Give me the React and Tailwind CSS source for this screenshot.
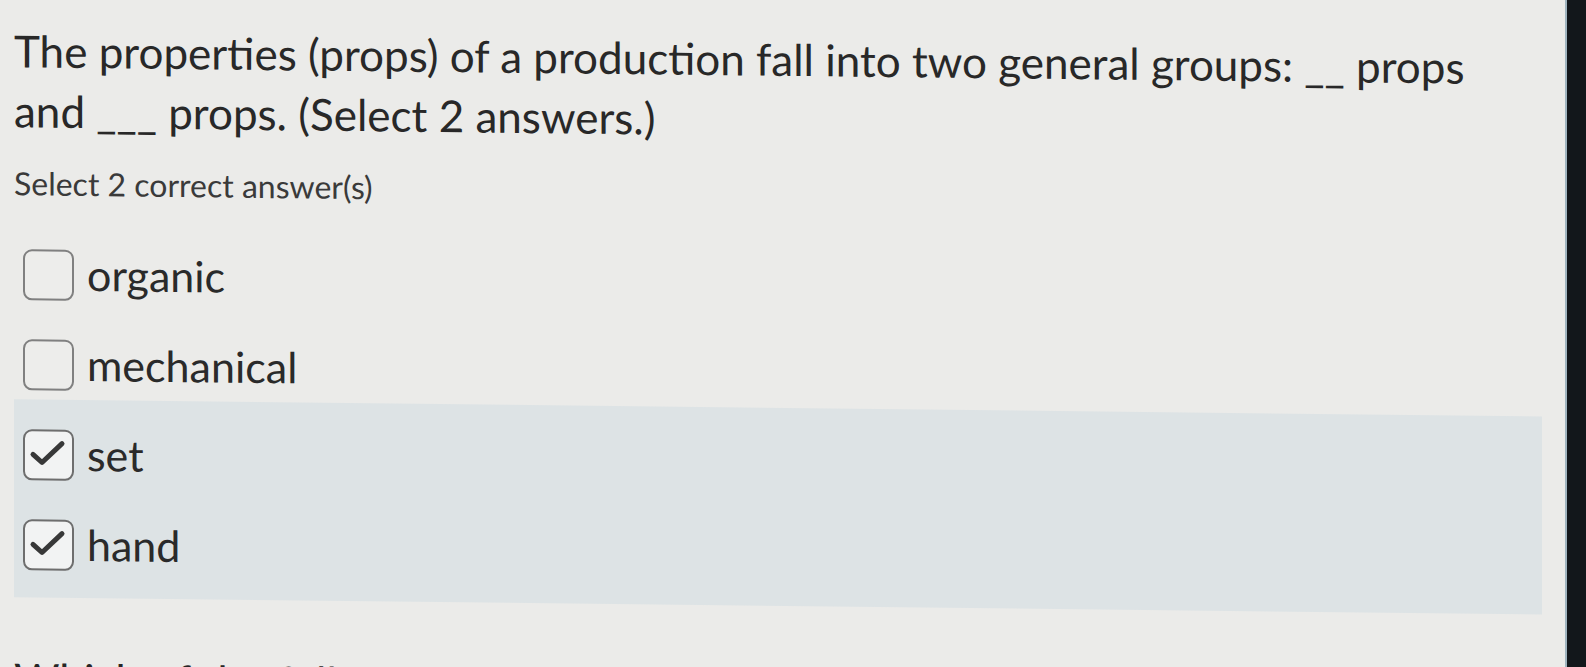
import React from "react";

const options = [
  { label: "organic", checked: false },
  { label: "mechanical", checked: false },
  { label: "set", checked: true },
  { label: "hand", checked: true },
];

const Checkbox = ({ checked }) => (
  <div
    className={
      checked
        ? "w-[51px] h-[51px] shrink-0 rounded-[9px] border-2 border-[#6e6e6e] bg-[#f2f3f3] flex items-center justify-center"
        : "w-[51px] h-[51px] shrink-0 rounded-[9px] border-2 border-[#808080] bg-[#ededeb]"
    }
  >
    {checked && (
      <svg width="47" height="47" viewBox="0 0 47 47" fill="none">
        <polyline
          points="8,23 17,31 37,12"
          stroke="#383838"
          strokeWidth="5"
          strokeLinecap="round"
          strokeLinejoin="round"
        />
      </svg>
    )}
  </div>
);

const OptionRow = ({ label, checked }) => (
  <div className="h-[90px] flex items-center gap-[13px] pl-[9px]">
    <Checkbox checked={checked} />
    <span className="text-[43px] leading-[50px] text-[#2a2a2a]">{label}</span>
  </div>
);

const App = () => {
  const plain = options.filter((o) => !o.checked);
  const picked = options.filter((o) => o.checked);

  return (
    <div className="h-screen w-full overflow-hidden bg-[#ebebe9] flex font-['Lato',_'Open_Sans',_sans-serif]">
      {/* question area */}
      <div className="flex-1 overflow-hidden">
        <div className="origin-top-left skew-y-[0.65deg] pl-[14px] pr-[23px] pt-[20px]">
          <h1 className="max-w-[1500px] text-[44px] leading-[60px] text-[#282828] font-normal">
            The properties (props) of a production fall into two general groups: __ props and ___ props. (Select 2 answers.)
          </h1>

          <p className="mt-[23px] text-[32px] leading-[40px] text-[#3a3a3a]">
            Select 2 correct answer(s)
          </p>

          <div className="mt-[26px]">
            {plain.map((o) => (
              <OptionRow key={o.label} {...o} />
            ))}
            <div className="-mt-[10px] pt-[10px] pb-[8px] bg-[#dde3e5]">
              {picked.map((o) => (
                <OptionRow key={o.label} {...o} />
              ))}
            </div>
          </div>

          {/* next question, cut off by the photo */}
          <p className="mt-[50px] text-[44px] leading-[62px] text-[#262626]">
            Which of the following
          </p>
        </div>
      </div>

      {/* monitor bezel */}
      <div className="w-[21px] shrink-0 bg-[#12171b] border-l-2 border-[#9fb4bf]" />
    </div>
  );
};

export default App;
